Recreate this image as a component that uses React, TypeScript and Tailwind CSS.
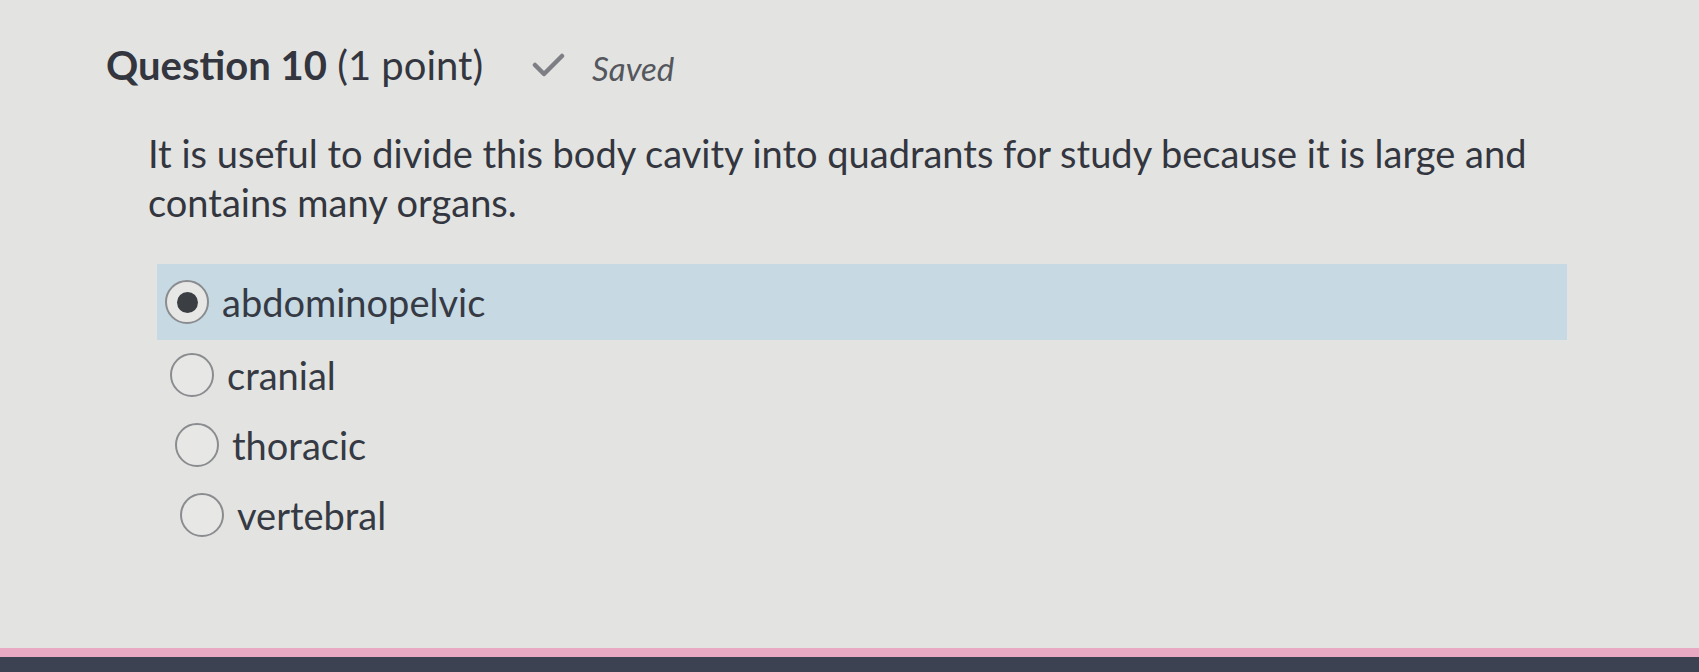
import React from 'react'

const OPTIONS = [
  { label: 'abdominopelvic', selected: true, shift: 'pl-[8px]' },
  { label: 'cranial', selected: false, shift: 'pl-[13px]' },
  { label: 'thoracic', selected: false, shift: 'pl-[18px]' },
  { label: 'vertebral', selected: false, shift: 'pl-[23px]' },
]

function Radio({ checked }: { checked: boolean }) {
  return (
    <span className="w-[44px] h-[44px] rounded-full border-2 border-[#8a8c8f] bg-[#e7e8e6] flex items-center justify-center shrink-0">
      {checked && <span className="w-[21px] h-[21px] rounded-full bg-[#3b3e43]" />}
    </span>
  )
}

export default function App() {
  return (
    <div className="w-[1699px] h-[672px] bg-[#e3e4e1] flex flex-col overflow-hidden font-['Lato','Noto_Sans',sans-serif] text-[#33363f]">
      <div className="flex-1 pl-[106px] pt-[41px]">

        {/* Header */}
        <div className="flex items-center h-[48px]">
          <h2 className="text-[40px] leading-[48px]">
            <span className="font-bold">Question 10</span> <span className="font-normal">(1 point)</span>
          </h2>
          <div className="flex items-center ml-[49px] text-[#55575e]">
            <svg width="33" height="24" viewBox="0 0 33 24" fill="none" stroke="#7d7f85" strokeWidth="4.5" strokeLinecap="round" strokeLinejoin="round">
              <polyline points="3 12 12 21 30 3" />
            </svg>
            <span className="ml-[27px] italic text-[33px] leading-[48px] mt-[6px]">Saved</span>
          </div>
        </div>

        {/* Question text */}
        <p className="mt-[40px] ml-[42px] w-[1440px] text-[38px] leading-[49px]">
          It is useful to divide this body cavity into quadrants for study because it is large and contains many organs.
        </p>

        {/* Answers */}
        <div className="mt-[37px] ml-[51px] w-[1410px] flex flex-col">
          {OPTIONS.map(opt => (
            <div
              key={opt.label}
              className={`flex items-center ${opt.selected ? 'h-[76px] bg-[#c7d9e3]' : 'h-[70px]'}`}
            >
              <div className={`flex items-center ${opt.shift}`}>
                <Radio checked={opt.selected} />
                <span className="ml-[13px] text-[38px] leading-[44px] text-[#363a44]">{opt.label}</span>
              </div>
            </div>
          ))}
        </div>
      </div>

      {/* Bottom edge */}
      <div className="h-[9px] bg-[#e9a9c2]" />
      <div className="h-[15px] bg-[#3d4253]" />
    </div>
  )
}
